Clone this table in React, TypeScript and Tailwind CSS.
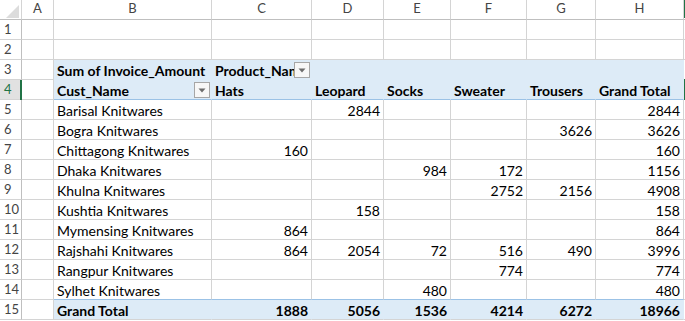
import React from "react";

type Row = {
  n: number;
  cells: (string | null)[]; // B..H
  kind: "plain" | "pivotTop" | "pivotHead" | "data" | "lastData" | "total";
};

const blank = [null, null, null, null, null, null, null];

const rows: Row[] = [
  { n: 1, cells: blank, kind: "plain" },
  { n: 2, cells: blank, kind: "plain" },
  { n: 3, cells: ["Sum of Invoice_Amount", "Product_Nam", null, null, null, null, null], kind: "pivotTop" },
  { n: 4, cells: ["Cust_Name", "Hats", "Leopard", "Socks", "Sweater", "Trousers", "Grand Total"], kind: "pivotHead" },
  { n: 5, cells: ["Barisal Knitwares", null, "2844", null, null, null, "2844"], kind: "data" },
  { n: 6, cells: ["Bogra Knitwares", null, null, null, null, "3626", "3626"], kind: "data" },
  { n: 7, cells: ["Chittagong Knitwares", "160", null, null, null, null, "160"], kind: "data" },
  { n: 8, cells: ["Dhaka Knitwares", null, null, "984", "172", null, "1156"], kind: "data" },
  { n: 9, cells: ["Khulna Knitwares", null, null, null, "2752", "2156", "4908"], kind: "data" },
  { n: 10, cells: ["Kushtia Knitwares", null, "158", null, null, null, "158"], kind: "data" },
  { n: 11, cells: ["Mymensing Knitwares", "864", null, null, null, null, "864"], kind: "data" },
  { n: 12, cells: ["Rajshahi Knitwares", "864", "2054", "72", "516", "490", "3996"], kind: "data" },
  { n: 13, cells: ["Rangpur Knitwares", null, null, null, "774", null, "774"], kind: "data" },
  { n: 14, cells: ["Sylhet Knitwares", null, null, "480", null, null, "480"], kind: "lastData" },
  { n: 15, cells: ["Grand Total", "1888", "5056", "1536", "4214", "6272", "18966"], kind: "total" },
];

const letters = ["A", "B", "C", "D", "E", "F", "G", "H"];

function DropButton() {
  return (
    <div className="absolute right-[1px] top-[2px] w-[16px] h-[16px] border border-[#a6a6a6] bg-[#f7f7f7] flex items-center justify-center">
      <svg width="8" height="5" viewBox="0 0 8 5">
        <polygon points="0.5,0.5 7.5,0.5 4,4.5" fill="#6d6d6d" />
      </svg>
    </div>
  );
}

function cellClass(kind: Row["kind"]): string {
  const base =
    "relative h-[20px] border-r border-b overflow-hidden whitespace-nowrap flex items-start pt-[2px] leading-[18px] text-[14px] text-black";
  switch (kind) {
    case "pivotTop":
      return base + " bg-[#ddebf7] border-r-[#ddebf7] border-b-[#ddebf7] font-bold";
    case "pivotHead":
      return base + " bg-[#ddebf7] border-r-[#ddebf7] border-b-[#9bc2e6] font-bold";
    case "data":
      return base + " border-r-[#d4d4d4] border-b-[#d4d4d4]";
    case "lastData":
      return base + " border-r-[#d4d4d4] border-b-[#9bc2e6]";
    case "total":
      return base + " bg-[#ddebf7] border-r-[#ddebf7] border-b-[#d4d4d4] font-bold";
    default:
      return base + " border-r-[#d4d4d4] border-b-[#d4d4d4]";
  }
}

export default function App() {
  return (
    <div
      className="w-[685px] h-[321px] overflow-hidden bg-white"
      style={{ fontFamily: "Lato, 'Liberation Sans', sans-serif" }}
    >
      <div className="grid grid-cols-[22px_32px_158px_100px_72px_67px_76px_69px_88px_1fr]">
        {/* Column headers */}
        <div className="h-[20px] border-r border-b border-r-[#d4d4d4] border-b-[#bfbfbf] relative">
          <svg className="absolute left-[6px] top-[5px]" width="13" height="13" viewBox="0 0 13 13">
            <polygon points="13,0 13,13 0,13" fill="#dcdcdc" />
          </svg>
        </div>
        {letters.map((l) => (
          <div
            key={l}
            className="h-[20px] border-r border-b border-r-[#d4d4d4] border-b-[#bfbfbf] flex items-center justify-center text-[13px] text-[#444444] pb-[1px]"
          >
            {l}
          </div>
        ))}
        <div className="h-[20px] border-b border-b-[#bfbfbf] flex">
          <div className="w-[2px] h-[18px] bg-[#217346]" />
        </div>

        {rows.map((r) => {
          const selected = r.n === 4;
          return (
            <React.Fragment key={r.n}>
              <div
                className={
                  selected
                    ? "h-[20px] border-b border-b-[#d4d4d4] bg-[#e1e1e1] flex items-center pl-[4px] text-[13px] text-[#217346] relative"
                    : "h-[20px] border-r border-b border-r-[#bfbfbf] border-b-[#d4d4d4] flex items-center pl-[4px] text-[13px] text-[#444444]"
                }
              >
                {r.n}
                {selected && <div className="absolute right-0 top-0 w-[2px] h-[20px] bg-[#217346]" />}
              </div>
              {/* Column A */}
              <div className="h-[20px] border-r border-b border-r-[#d4d4d4] border-b-[#d4d4d4]" />
              {r.cells.map((c, i) => {
                const isLabel = i === 0 || r.kind === "pivotHead" || r.kind === "pivotTop";
                return (
                  <div
                    key={i}
                    className={cellClass(r.kind) + (isLabel ? " justify-start pl-[3px]" : " justify-end pr-[3px]")}
                  >
                    {c}
                    {r.kind === "pivotTop" && i === 1 && <DropButton />}
                    {r.kind === "pivotHead" && i === 0 && <DropButton />}
                  </div>
                );
              })}
              <div className="h-[20px] border-b border-b-[#d4d4d4] flex">
                {selected && <div className="w-[2px] h-[21px] -mt-[1px] bg-[#217346]" />}
              </div>
            </React.Fragment>
          );
        })}
      </div>
    </div>
  );
}
